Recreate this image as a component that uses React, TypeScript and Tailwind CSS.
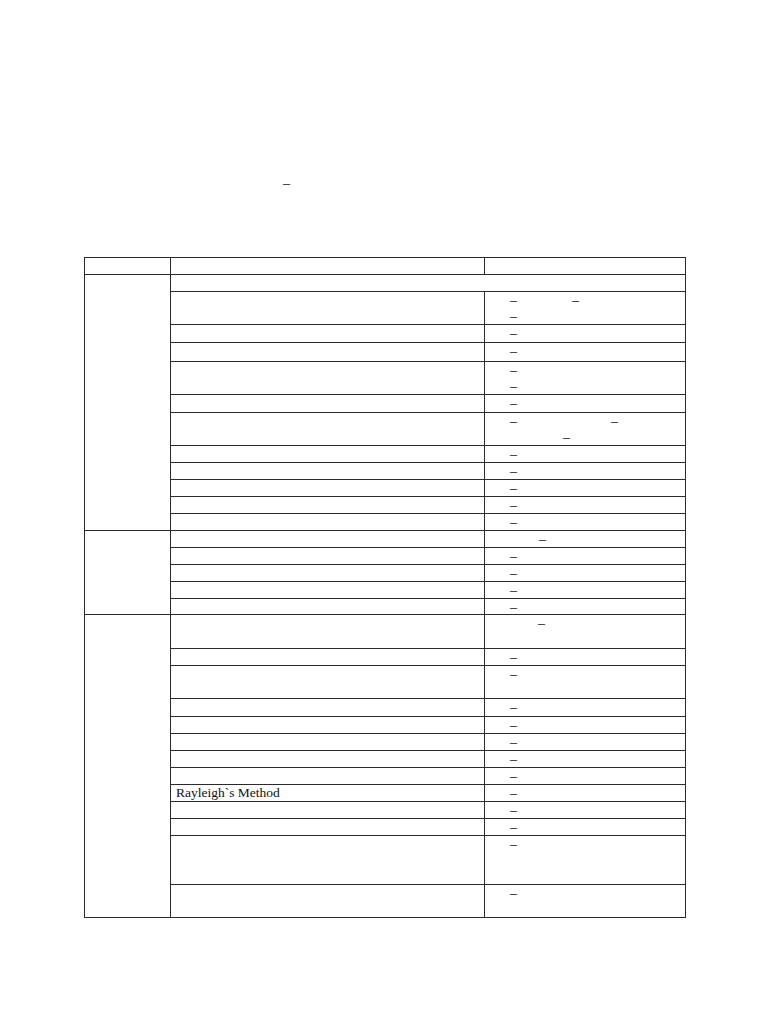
import React from "react";

type Row = { h: string; span?: boolean; lines: string[][]; text?: string };

const g1: Row[] = [
  { h: "h-[17px]", span: true, lines: [] },
  { h: "h-[33px]", lines: [["ml-[25px]", "ml-[55px]"], ["ml-[25px]"]] },
  { h: "h-[18px]", lines: [["ml-[25px]"]] },
  { h: "h-[19px]", lines: [["ml-[25px]"]] },
  { h: "h-[33px]", lines: [["ml-[25px]"], ["ml-[25px]"]] },
  { h: "h-[18px]", lines: [["ml-[25px]"]] },
  { h: "h-[33px]", lines: [["ml-[25px]", "ml-[94px]"], ["ml-[78px]"]] },
  { h: "h-[17px]", lines: [["ml-[25px]"]] },
  { h: "h-[17px]", lines: [["ml-[25px]"]] },
  { h: "h-[17px]", lines: [["ml-[25px]"]] },
  { h: "h-[17px]", lines: [["ml-[25px]"]] },
  { h: "h-[17px]", lines: [["ml-[25px]"]] },
];

const g2: Row[] = [
  { h: "h-[17px]", lines: [["ml-[54px]"]] },
  { h: "h-[17px]", lines: [["ml-[25px]"]] },
  { h: "h-[17px]", lines: [["ml-[25px]"]] },
  { h: "h-[17px]", lines: [["ml-[25px]"]] },
  { h: "h-[16px]", lines: [["ml-[25px]"]] },
];

const g3: Row[] = [
  { h: "h-[34px]", lines: [["ml-[53px]"]] },
  { h: "h-[17px]", lines: [["ml-[25px]"]] },
  { h: "h-[33px]", lines: [["ml-[25px]"]] },
  { h: "h-[18px]", lines: [["ml-[25px]"]] },
  { h: "h-[17px]", lines: [["ml-[25px]"]] },
  { h: "h-[17px]", lines: [["ml-[25px]"]] },
  { h: "h-[17px]", lines: [["ml-[25px]"]] },
  { h: "h-[17px]", lines: [["ml-[25px]"]] },
  { h: "h-[17px]", lines: [["ml-[25px]"]], text: "Rayleigh`s Method" },
  { h: "h-[17px]", lines: [["ml-[25px]"]] },
  { h: "h-[17px]", lines: [["ml-[25px]"]] },
  { h: "h-[49px]", lines: [["ml-[25px]"]] },
  { h: "h-[33px]", lines: [["ml-[25px]"]] },
];

function Dashes({ lines }: { lines: string[][] }) {
  return (
    <>
      {lines.map((ln, i) => (
        <div key={i} className="flex h-[16px] leading-[17px] text-[14px] text-[#151515]">
          {ln.map((c, j) => (
            <span key={j} className={c}>
              –
            </span>
          ))}
        </div>
      ))}
    </>
  );
}

function Group({ rows }: { rows: Row[] }) {
  return (
    <div className="flex">
      <div className="w-[86px] shrink-0 border-r border-b border-[#2a2a2a]" />
      <div className="flex flex-1 flex-col">
        {rows.map((r, i) =>
          r.span ? (
            <div key={i} className={`${r.h} border-b border-[#2a2a2a]`} />
          ) : (
            <div key={i} className={`${r.h} flex border-b border-[#2a2a2a]`}>
              <div className="w-[314px] shrink-0 border-r border-[#2a2a2a] pl-[5px] text-[13.5px] leading-[15px] text-[#111]">
                {r.text ?? ""}
              </div>
              <div className="flex-1">
                <Dashes lines={r.lines} />
              </div>
            </div>
          )
        )}
      </div>
    </div>
  );
}

export default function App() {
  return (
    <div
      className="w-[768px] h-[1024px] bg-white"
      style={{ fontFamily: '"Liberation Serif", "Times New Roman", serif' }}
    >
      <div className="h-[257px] pt-[175px] pl-[283px]">
        <div className="flex h-[16px] leading-[17px] text-[14px] text-[#151515]">
          <span>–</span>
        </div>
      </div>
      <div className="ml-[84px] w-[602px] border-l border-r border-t border-[#2a2a2a]">
        <div className="flex h-[17px] border-b border-[#2a2a2a]">
          <div className="w-[86px] shrink-0 border-r border-[#2a2a2a]" />
          <div className="w-[314px] shrink-0 border-r border-[#2a2a2a]" />
          <div className="flex-1" />
        </div>
        <Group rows={g1} />
        <Group rows={g2} />
        <Group rows={g3} />
      </div>
    </div>
  );
}
